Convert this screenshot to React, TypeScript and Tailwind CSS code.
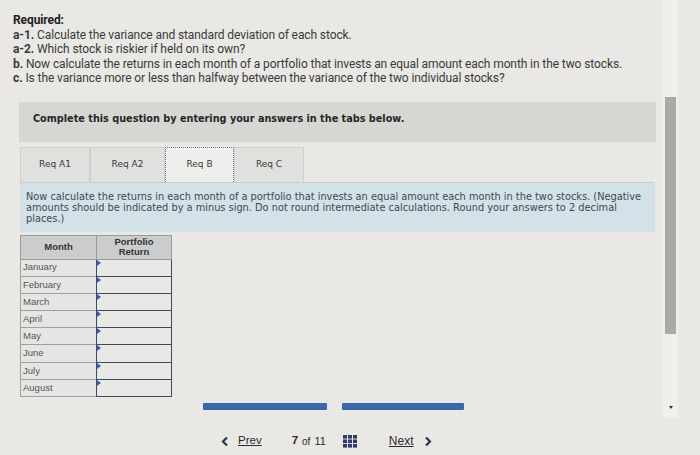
import React from 'react';

const months = ['January', 'February', 'March', 'April', 'May', 'June', 'July', 'August'];

const tabs = [
  { label: 'Req A1', w: 'w-[70px]', active: false },
  { label: 'Req A2', w: 'w-[75px]', active: false },
  { label: 'Req B', w: 'w-[69px]', active: true },
  { label: 'Req C', w: 'w-[70px]', active: false },
];

const GridIcon = () => (
  <svg width="14" height="13" viewBox="0 0 14 13">
    {[0, 1, 2].map((r) =>
      [0, 1, 2].map((c) => (
        <rect key={`${r}-${c}`} x={c * 5} y={r * 4.5} width="4" height="3.6" fill="#2c3a6e" />
      ))
    )}
  </svg>
);

const Chevron = ({ dir }: { dir: 'left' | 'right' }) => (
  <svg width="8" height="11" viewBox="0 0 8 11">
    <path
      d={dir === 'left' ? 'M6 1.5 L2 5.5 L6 9.5' : 'M2 1.5 L6 5.5 L2 9.5'}
      fill="none"
      stroke="#2a3550"
      strokeWidth="2.2"
    />
  </svg>
);

export default function App() {
  return (
    <div className="w-[700px] h-[455px] bg-[#e9e8e5] flex overflow-hidden">
      <div className="w-[663px] pl-[13px] pt-[13px]">
        {/* Required */}
        <div className="text-[12px] leading-[14.5px] text-[#3a3a3a] font-['Roboto',sans-serif] tracking-[-0.1px]">
          <div className="font-bold text-[#222]">Required:</div>
          <div><span className="font-bold">a-1.</span> Calculate the variance and standard deviation of each stock.</div>
          <div><span className="font-bold">a-2.</span> Which stock is riskier if held on its own?</div>
          <div><span className="font-bold">b.</span> Now calculate the returns in each month of a portfolio that invests an equal amount each month in the two stocks.</div>
          <div><span className="font-bold">c.</span> Is the variance more or less than halfway between the variance of the two individual stocks?</div>
        </div>

        {/* Instruction box */}
        <div className="mt-[16px] ml-[6px] w-[637px] h-[40px] bg-[#d6d6d3] pl-[14px] pt-[10px]">
          <div className="text-[9.7px] font-bold text-[#262626] font-['DejaVu_Sans',sans-serif]">
            Complete this question by entering your answers in the tabs below.
          </div>
        </div>

        {/* Tabs */}
        <div className="mt-[5px] ml-[7px] flex h-[35px] font-['DejaVu_Sans',sans-serif]">
          {tabs.map((t) => (
            <div
              key={t.label}
              className={`${t.w} flex items-center justify-center text-[9px] text-[#3a3a3a] ${
                t.active
                  ? 'bg-[#eeeeec] border border-dotted border-[#777] border-b-0'
                  : 'bg-[#e0e0de] border border-[#cfcfcd] border-b-0'
              }`}
            >
              {t.label}
            </div>
          ))}
        </div>

        {/* Info box */}
        <div className="ml-[7px] w-[635px] h-[50px] bg-[#d3e1e8] border-t border-[#c4cfd6] px-[6px] pt-[8px]">
          <div className="text-[9.8px] leading-[11px] text-[#3e4852] font-['DejaVu_Sans',sans-serif]">
            Now calculate the returns in each month of a portfolio that invests an equal amount each month in the two stocks. (Negative amounts should be indicated by a minus sign. Do not round intermediate calculations. Round your answers to 2 decimal places.)
          </div>
        </div>

        {/* Table */}
        <div className="mt-[3px] ml-[7px] w-[152px] font-['Liberation_Sans',sans-serif]">
          <div className="flex h-[25px] bg-[#cbcccd] border border-[#9a9a9a]">
            <div className="w-[76px] flex items-center justify-center text-[9.5px] font-bold text-[#333] border-r border-[#9a9a9a]">
              Month
            </div>
            <div className="flex-1 flex items-center justify-center text-center text-[9.5px] leading-[10.5px] font-bold text-[#333]">
              Portfolio
              <br />
              Return
            </div>
          </div>
          {months.map((m) => (
            <div key={m} className="flex h-[17.2px]">
              <div className="w-[76px] bg-[#e5e5e4] border-l border-b border-[#a0a0a0] pl-[2px] flex items-center text-[9.5px] text-[#555]">
                {m}
              </div>
              <div className="flex-1 relative bg-[#e8e8e7] border-[1.5px] border-[#3d4a66] border-t-0 first:border-t">
                <div className="absolute left-0 top-0 w-0 h-0 border-t-[3px] border-b-[3px] border-l-[4px] border-t-transparent border-b-transparent border-l-[#3c5bb0]" />
              </div>
            </div>
          ))}
        </div>

        {/* Blue bars */}
        <div className="mt-[6px] ml-[190px] flex gap-[15px]">
          <div className="w-[124px] h-[7px] bg-[#3c66a7] rounded-[1px]" />
          <div className="w-[122px] h-[7px] bg-[#3c66a7] rounded-[1px]" />
        </div>

        {/* Nav */}
        <div className="mt-[22px] ml-[208px] flex items-center font-['Liberation_Sans',sans-serif] text-[#2a2a2a]">
          <Chevron dir="left" />
          <span className="ml-[9px] text-[11.5px] underline">Prev</span>
          <span className="ml-[30px] text-[11.5px] font-bold">7</span>
          <span className="ml-[4px] text-[10px]">of</span>
          <span className="ml-[4px] text-[11px]">11</span>
          <span className="ml-[17px]"><GridIcon /></span>
          <span className="ml-[32px] text-[12px] underline">Next</span>
          <span className="ml-[10px]"><Chevron dir="right" /></span>
        </div>
      </div>

      {/* Scrollbar */}
      <div className="w-[15px] h-[418px] bg-[#efefed] flex flex-col items-center pt-[97px]">
        <div className="w-[11px] h-[237px] bg-[#a9a9a8]" />
        <div className="mt-[72px] w-0 h-0 border-l-[2.5px] border-r-[2.5px] border-t-[3px] border-l-transparent border-r-transparent border-t-[#333]" />
      </div>
    </div>
  );
}
